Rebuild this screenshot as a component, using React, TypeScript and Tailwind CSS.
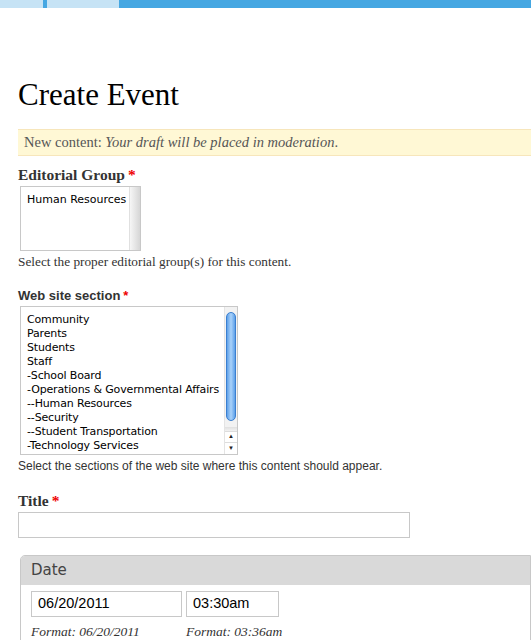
const serif = "font-['Liberation_Serif',Georgia,serif]";
const sans = "font-['Liberation_Sans',Arial,sans-serif]";
const lucida = "font-['DejaVu_Sans',Verdana,sans-serif]";

const sections = [
  "Community",
  "Parents",
  "Students",
  "Staff",
  "-School Board",
  "-Operations & Governmental Affairs",
  "--Human Resources",
  "--Security",
  "--Student Transportation",
  "-Technology Services",
];

const Req = () => <span className="text-[#e00] ml-[3px]">*</span>;

const App = () => {
  return (
    <div className="w-[531px] h-[640px] overflow-hidden bg-white text-[#333]">
      {/* top tab bar */}
      <div className="flex h-[8px]">
        <div className="w-[43px] bg-[#c6e3f5]" />
        <div className="w-[4px] bg-[#45a7e2]" />
        <div className="w-[72px] bg-[#c6e3f5]" />
        <div className="flex-1 bg-[#45a7e2]" />
      </div>

      <div className="pl-[18px]">
        <h1 className={`${serif} text-[31px] leading-none text-black mt-[71px]`}>Create Event</h1>

        <div className={`${serif} mt-[19px] h-[27px] flex items-center pl-[6px] bg-[#fff8d5] border-y border-[#f7e6bb] text-[14.5px] text-[#555]`}>
          New content:&nbsp;<em>Your draft will be placed in moderation</em>.
        </div>

        {/* editorial group */}
        <div className={`${serif} font-bold text-[15.5px] mt-[10px] leading-[18px]`}>
          Editorial Group<Req />
        </div>
        <div className="ml-[2px] mt-[2px] w-[121px] h-[65px] border border-[#c8c8c8] flex">
          <div className={`${lucida} flex-1 text-[11px] text-black pl-[6px] pt-[6px] leading-[14px]`}>Human Resources</div>
          <div className="w-[11px] bg-gradient-to-r from-[#f6f6f6] to-[#d6d6d6] border-l border-[#e0e0e0]" />
        </div>
        <div className={`${serif} text-[13.3px] mt-[3px] leading-[16px]`}>
          Select the proper editorial group(s) for this content.
        </div>

        {/* web site section */}
        <div className={`${sans} font-bold text-[13px] mt-[18px] leading-[16px]`}>
          Web site section<Req />
        </div>
        <div className="ml-[2px] mt-[2px] w-[218px] h-[149px] border border-[#c8c8c8] flex">
          <div className={`${lucida} flex-1 text-[11px] text-black pl-[6px] pt-[6px] leading-[14px] tracking-[-0.15px] whitespace-nowrap overflow-hidden`}>
            {sections.map((s) => (
              <div key={s}>{s}</div>
            ))}
          </div>
          <div className="w-[13px] flex flex-col bg-[#f2f2f2] border-l border-[#e4e4e4]">
            <div className="mt-[5px] mx-[1px] h-[112px] rounded-full border border-[#3a7fd0] bg-gradient-to-r from-[#5ea0e8] via-[#a9d2fa] to-[#5ea0e8]" />
            <div className="mt-[6px] h-[4px] bg-gradient-to-b from-[#e0e0e0] to-[#f2f2f2]" />
            <div className="flex-1" />
            <div className="h-[12px] flex items-center justify-center border-t border-[#ddd] bg-white text-[6px] text-[#222]">▲</div>
            <div className="h-[12px] flex items-center justify-center border-t border-[#ddd] bg-white text-[6px] text-[#222]">▼</div>
          </div>
        </div>
        <div className={`${sans} text-[12px] mt-[3px] leading-[16px]`}>
          Select the sections of the web site where this content should appear.
        </div>

        {/* title */}
        <div className={`${serif} font-bold text-[15.5px] mt-[18px] leading-[18px]`}>
          Title<Req />
        </div>
        <div className="mt-[2px] w-[392px] h-[26px] border border-[#c8c8c8]" />

        {/* date fieldset */}
        <div className="ml-[2px] mt-[17px] border border-[#c8c8c8] rounded-tl-[5px] overflow-hidden">
          <div className={`${lucida} h-[29px] bg-[#d9d9d9] flex items-center pl-[10px] text-[15px] text-[#444]`}>
            Date
          </div>
          <div className="pl-[10px] pt-[6px] flex gap-[4px]">
            <div>
              <div className={`${sans} w-[151px] h-[26px] border border-[#c8c8c8] flex items-center pl-[6px] text-[14.5px] text-black`}>
                06/20/2011
              </div>
              <div className={`${serif} italic text-[13.5px] mt-[5px]`}>Format: 06/20/2011</div>
            </div>
            <div>
              <div className={`${sans} w-[93px] h-[26px] border border-[#c8c8c8] flex items-center pl-[6px] text-[14.5px] text-black`}>
                03:30am
              </div>
              <div className={`${serif} italic text-[13.5px] mt-[5px]`}>Format: 03:36am</div>
            </div>
          </div>
        </div>
      </div>
    </div>
  );
};

export default App;
